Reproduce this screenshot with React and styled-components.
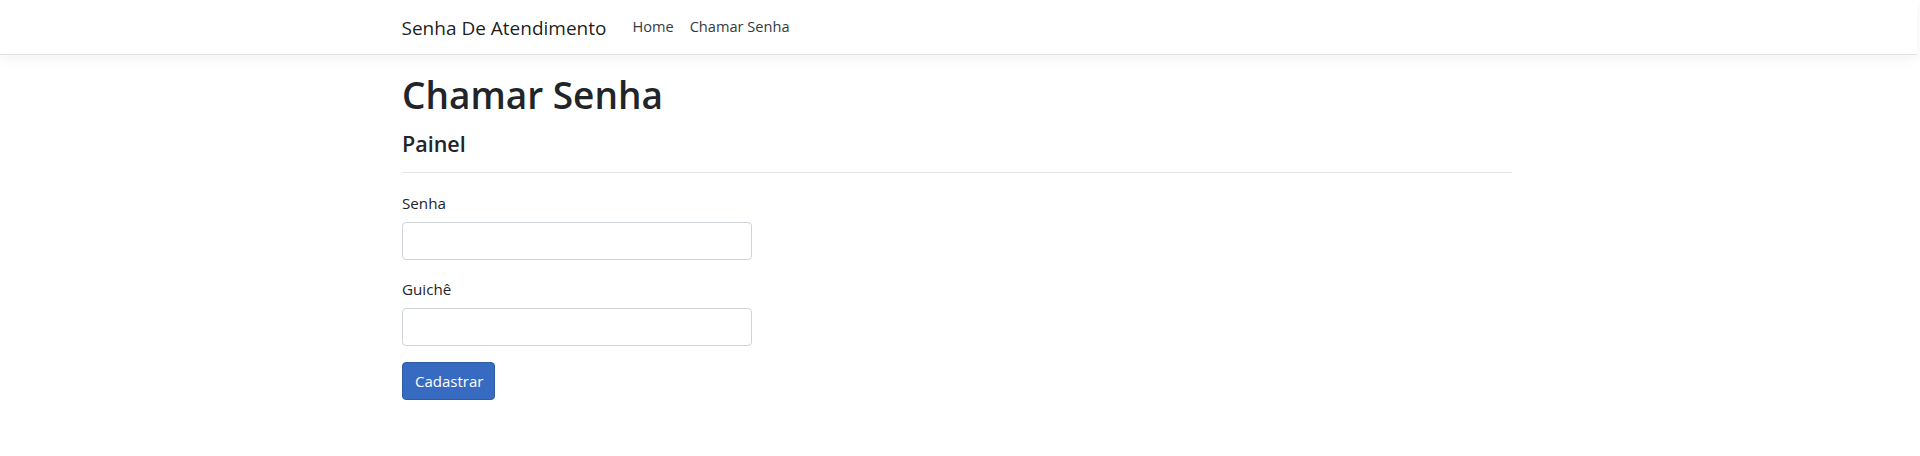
import React from 'react';
import styled, { createGlobalStyle } from 'styled-components';

const GlobalStyle = createGlobalStyle`
  html, body {
    margin: 0;
    padding: 0;
    background: #fff;
  }
  body {
    font-family: "Open Sans", "Noto Sans", Arial, sans-serif;
    font-size: 16px;
    line-height: 1.5;
    color: #212529;
  }
  * { box-sizing: border-box; }
`;

const Page = styled.div`
  width: 1914px;
`;

const Navbar = styled.nav`
  width: 1917px;
  height: 55px;
  background: #fff;
  border-bottom: 1px solid #e2e2e2;
  box-shadow: 0 4px 12px rgba(0, 0, 0, 0.05);
  margin-bottom: 16px;
`;

const Container = styled.div`
  width: 1140px;
  margin: 0 auto;
  padding: 0 15px;
  display: ${p => (p.$nav ? 'flex' : 'block')};
  align-items: center;
  height: ${p => (p.$nav ? '100%' : 'auto')};
`;

const Brand = styled.a`
  font-size: 19px;
  line-height: 30px;
  color: rgba(0, 0, 0, 0.9);
  margin-left: -2px;
  margin-right: 18px;
  text-decoration: none;
  padding-top: 1px;
`;

const NavLinks = styled.ul`
  list-style: none;
  display: flex;
  margin: 0;
  padding: 0;
`;

const NavLink = styled.a`
  display: block;
  padding: 8px;
  font-size: 14.6px;
  color: #343a40;
  text-decoration: none;
`;

const Title = styled.h1`
  margin: 2px 0 8px;
  font-size: 37px;
  font-weight: 600;
  line-height: 48px;
`;

const Subtitle = styled.h4`
  margin: 0;
  padding-top: 2px;
  font-size: 21.5px;
  font-weight: 600;
  line-height: 29px;
`;

const Divider = styled.hr`
  margin: 14px 0 17px;
  border: 0;
  border-top: 1px solid rgba(0, 0, 0, 0.1);
`;

const Form = styled.form`
  width: 350px;
`;

const FormGroup = styled.div`
  margin-bottom: 16px;
`;

const Label = styled.label`
  display: block;
  padding-top: 1px;
  margin-bottom: 7px;
  font-size: 15.2px;
  line-height: 24px;
`;

const Input = styled.input`
  display: block;
  width: 100%;
  height: 38px;
  padding: 6px 12px;
  font-size: 16px;
  border: 1px solid #ced4da;
  border-radius: 4px;
  background: #fff;
  outline: none;
`;

const Button = styled.button`
  height: 38px;
  padding: 0 11px 0 12px;
  font-family: inherit;
  font-size: 15px;
  color: #fff;
  background: #366bc1;
  border: 1px solid #2e5ca9;
  border-radius: 4px;
  cursor: pointer;
`;

export default function App() {
  return (
    <Page>
      <GlobalStyle />
      <Navbar>
        <Container $nav>
          <Brand href="#">Senha De Atendimento</Brand>
          <NavLinks>
            <li><NavLink href="#">Home</NavLink></li>
            <li><NavLink href="#">Chamar Senha</NavLink></li>
          </NavLinks>
        </Container>
      </Navbar>
      <Container>
        <Title>Chamar Senha</Title>
        <Subtitle>Painel</Subtitle>
        <Divider />
        <Form onSubmit={e => e.preventDefault()}>
          <FormGroup>
            <Label>Senha</Label>
            <Input type="text" />
          </FormGroup>
          <FormGroup>
            <Label>Guichê</Label>
            <Input type="text" />
          </FormGroup>
          <Button type="submit">Cadastrar</Button>
        </Form>
      </Container>
    </Page>
  );
}
